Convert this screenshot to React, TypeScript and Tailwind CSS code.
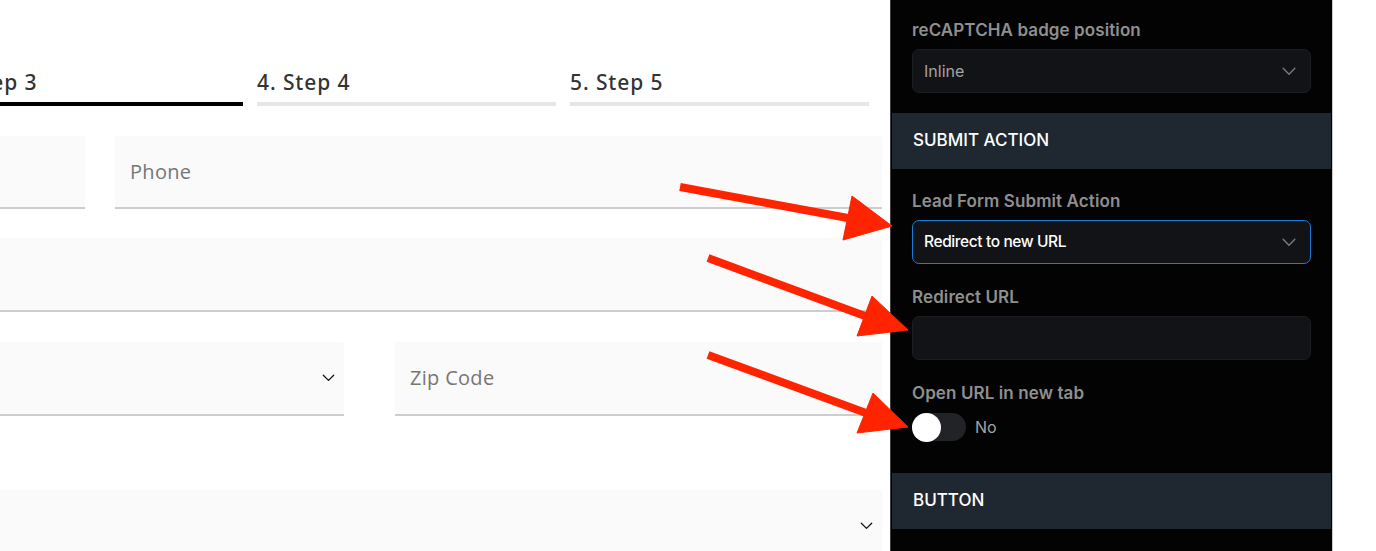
import React from "react";

const LEFT_FONT = { fontFamily: '"Open Sans", "Noto Sans", sans-serif' };
const TAB_FONT = { fontFamily: '"Noto Sans", "Open Sans", sans-serif' };
const PANEL_FONT = { fontFamily: 'Inter, "Noto Sans", sans-serif' };

function Chevron({ className }: { className: string }) {
  return (
    <svg viewBox="0 0 16 10" className={className} fill="none" stroke="currentColor">
      <path d="M1.5 1.5 8 8l6.5-6.5" strokeWidth="1.6" strokeLinecap="round" strokeLinejoin="round" />
    </svg>
  );
}

function Field({
  placeholder,
  select,
  className = "",
}: {
  placeholder?: string;
  select?: boolean;
  className?: string;
}) {
  return (
    <div
      className={`flex items-center justify-between rounded-t-[2px] border-b-2 border-[#cdcdcd] bg-[#fafafa] pl-[15px] pr-[8px] ${className}`}
    >
      <span className="text-[20px] tracking-[0.3px] text-[#767676]">{placeholder}</span>
      {select && <Chevron className="h-[8px] w-[15px] text-[#111]" />}
    </div>
  );
}

function StepTabs() {
  const tabs = [
    { label: "3. Step 3", active: true },
    { label: "4. Step 4", active: false },
    { label: "5. Step 5", active: false },
  ];
  return (
    <div className="flex gap-[14px] pt-[68px]" style={TAB_FONT}>
      {tabs.map((t) => (
        <div key={t.label} className="w-[299px]">
          <div className="text-[21px] font-medium leading-[28px] tracking-[0.9px] text-[#333]">{t.label}</div>
          <div className={`mt-[6px] h-[4px] ${t.active ? "bg-black" : "bg-[#e6e6e6]"}`} />
        </div>
      ))}
    </div>
  );
}

function LeadForm() {
  return (
    <div className="relative w-[890px] shrink-0 overflow-hidden bg-white" style={LEFT_FONT}>
      <div className="ml-[-56px] w-[938px]">
        <StepTabs />
        <div className="mt-[30px] grid h-[73px] grid-cols-[141px_1fr] gap-[30px]">
          <Field />
          <Field placeholder="Phone" />
        </div>
        <Field className="mt-[29px] h-[74px]" />
        <div className="mt-[30px] grid h-[74px] grid-cols-[400px_1fr] gap-[51px]">
          <Field select />
          <Field placeholder="Zip Code" className="pl-[13px]" />
        </div>
        <Field select className="mt-[74px] h-[74px]" />
      </div>
    </div>
  );
}

function Label({ children }: { children: React.ReactNode }) {
  return (
    <div className="text-[17px] font-semibold leading-[24px] tracking-[0.1px] text-[#8f8f8f]">{children}</div>
  );
}

function SectionHeader({ children, className = "" }: { children: React.ReactNode; className?: string }) {
  return (
    <div className={`mx-[1px] flex h-[56px] items-center bg-[#1f2831] px-[21px] text-[17px] font-medium text-white ${className}`}>
      {children}
    </div>
  );
}

function SettingsPanel() {
  return (
    <div
      className="w-[443px] shrink-0 border-l border-r border-l-[#3c3c3c] border-r-[#c9c9c9] bg-[#030304]"
      style={PANEL_FONT}
    >
      <div className="px-[21px] pt-[18px]">
        <Label>reCAPTCHA badge position</Label>
        <div className="mt-[7px] flex h-[44px] items-center justify-between rounded-[7px] border border-[#1d1e21] bg-[#121316] pl-[11px] pr-[13px]">
          <span className="text-[16px] text-[#a3a3a3]">Inline</span>
          <Chevron className="h-[9px] w-[16px] text-[#7a7a7a]" />
        </div>
      </div>
      <SectionHeader className="mt-[20px]">SUBMIT ACTION</SectionHeader>
      <div className="px-[21px] pt-[20px]">
        <Label>Lead Form Submit Action</Label>
        <div className="mt-[7px] flex h-[44px] items-center justify-between rounded-[7px] border border-[#1b7bd6] bg-[#121316] pl-[11px] pr-[13px]">
          <span className="text-[15.5px] font-medium tracking-[-0.4px] text-white">Redirect to new URL</span>
          <Chevron className="h-[9px] w-[16px] text-[#7a7a7a]" />
        </div>
        <div className="mt-[21px]">
          <Label>Redirect URL</Label>
        </div>
        <div className="mt-[7px] h-[44px] rounded-[7px] border border-[#1d1e21] bg-[#121316]" />
        <div className="mt-[21px]">
          <Label>Open URL in new tab</Label>
        </div>
        <div className="mt-[8px] flex items-center gap-[9px]">
          <div className="flex h-[28px] w-[54px] items-center rounded-full bg-[#222326]">
            <div className="h-[29px] w-[29px] rounded-full bg-white" />
          </div>
          <span className="text-[16px] text-[#a3a3a3]">No</span>
        </div>
      </div>
      <SectionHeader className="mt-[32px]">BUTTON</SectionHeader>
    </div>
  );
}

function Arrows() {
  const arrows = [
    { shaft: "M680 187 L848 218", head: "892,226 852,196 843,240" },
    { shaft: "M708 258 L865 316", head: "908,330 872,296 857,336" },
    { shaft: "M708 355 L866 413", head: "908,427 873,393 857,433" },
  ];
  return (
    <svg className="pointer-events-none absolute inset-0" width="1376" height="551" viewBox="0 0 1376 551">
      {arrows.map((a, i) => (
        <g key={i} fill="#ff2400" stroke="#ff2400">
          <path d={a.shaft} strokeWidth="8" fill="none" />
          <polygon points={a.head} strokeWidth="1" strokeLinejoin="round" />
        </g>
      ))}
    </svg>
  );
}

export default function App() {
  return (
    <div className="relative flex h-[551px] w-[1376px] overflow-hidden bg-white">
      <LeadForm />
      <SettingsPanel />
      <div className="flex-1 bg-white" />
      <Arrows />
    </div>
  );
}
